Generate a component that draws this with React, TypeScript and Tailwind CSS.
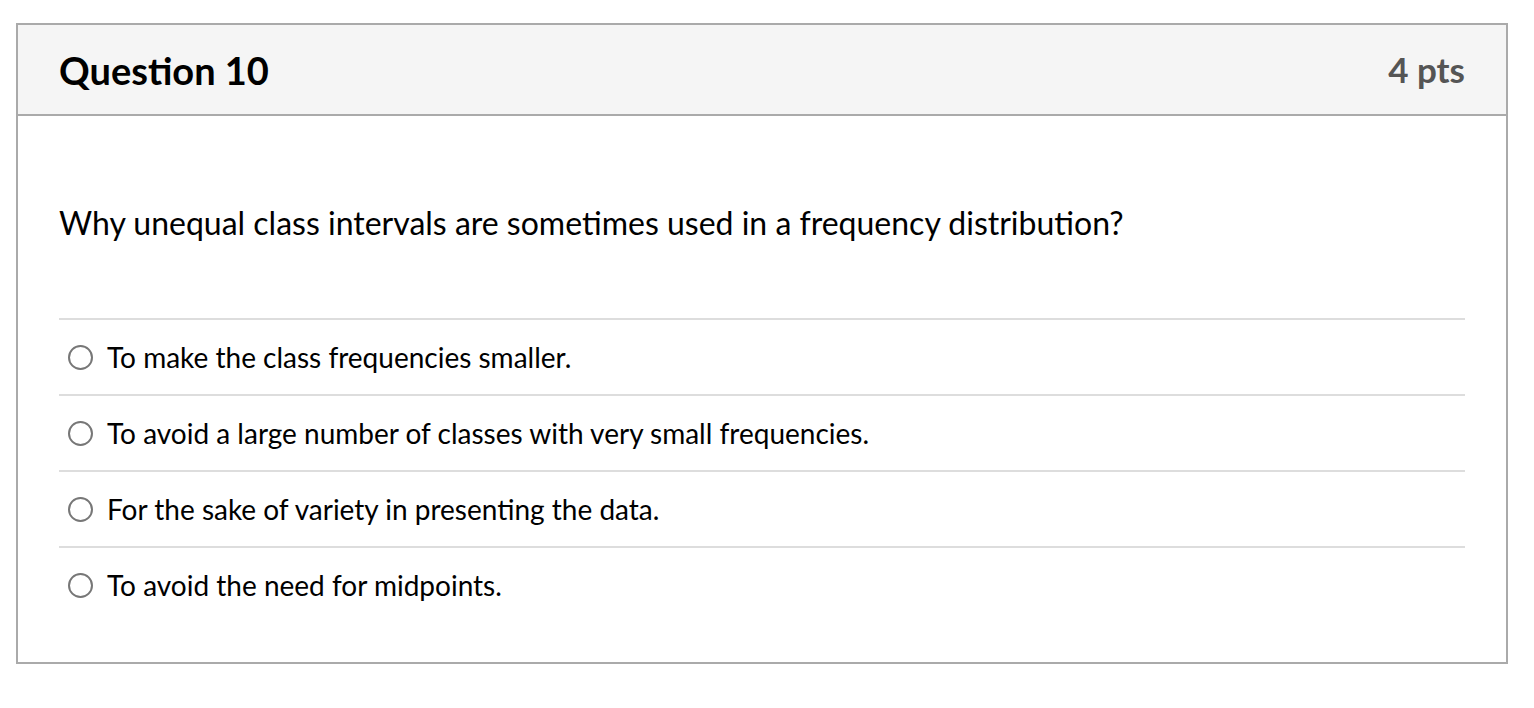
import React from "react";

const ANSWERS = [
  "To make the class frequencies smaller.",
  "To avoid a large number of classes with very small frequencies.",
  "For the sake of variety in presenting the data.",
  "To avoid the need for midpoints.",
];

export default function App() {
  return (
    <div className="min-h-screen bg-white pt-[23px] pl-[16px] font-['Lato','Noto_Sans',sans-serif] text-black">
      <div className="w-[1492px] border-2 border-[#aaaaaa]">
        <div className="flex h-[91px] items-center justify-between border-b-2 border-[#aaaaaa] bg-[#f5f5f5] px-[41px]">
          <h2 className="text-[38px] font-bold leading-none">Question 10</h2>
          <div className="text-[35px] font-bold leading-none text-[#555555]">4 pts</div>
        </div>
        <div className="px-[41px] pt-[87px] pb-[40px]">
          <p className="text-[32px] leading-[40px]">
            Why unequal class intervals are sometimes used in a frequency distribution?
          </p>
          <div className="mt-[75px]">
            {ANSWERS.map((a) => (
              <label
                key={a}
                className="flex h-[76px] items-center gap-[14px] border-t-2 border-[#dddddd] pl-[9px]"
              >
                <span className="h-[25px] w-[25px] shrink-0 rounded-full border-2 border-[#777777] bg-white" />
                <span className="text-[28px] leading-none">{a}</span>
              </label>
            ))}
          </div>
        </div>
      </div>
    </div>
  );
}
